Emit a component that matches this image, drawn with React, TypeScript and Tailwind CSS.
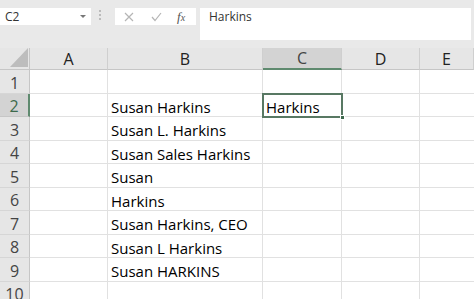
import React from 'react';

const cols = ['A', 'B', 'C', 'D', 'E'];

const rows: Record<number, string> = {
  2: 'Susan Harkins',
  3: 'Susan L. Harkins',
  4: 'Susan Sales Harkins',
  5: 'Susan',
  6: 'Harkins',
  7: 'Susan Harkins, CEO',
  8: 'Susan L Harkins',
  9: 'Susan HARKINS',
};

const cellFont = { fontFamily: '"Open Sans", "Noto Sans", sans-serif' };

export default function App() {
  return (
    <div className="w-[474px] h-[299px] overflow-hidden bg-white" style={cellFont}>
      {/* formula bar */}
      <div className="h-[48px] bg-[#e9e9e9] relative">
        <div className="absolute left-0 top-[8px] w-[91px] h-[17px] bg-white flex items-center justify-between pl-[5px] pr-[5px]">
          <span className="text-[12px] text-[#333] leading-none">C2</span>
          <span className="w-0 h-0 border-l-[3px] border-r-[3px] border-t-[3px] border-l-transparent border-r-transparent border-t-[#777]" />
        </div>
        <div className="absolute left-[99px] top-[10px] flex flex-col gap-[2px]">
          <span className="w-[2px] h-[2px] bg-[#bbb]" />
          <span className="w-[2px] h-[2px] bg-[#bbb]" />
          <span className="w-[2px] h-[2px] bg-[#bbb]" />
        </div>
        <div className="absolute left-[115px] top-[8px] w-[81px] h-[17px] bg-white flex items-center">
          <svg className="ml-[9px]" width="10" height="10" viewBox="0 0 10 10">
            <path d="M1 1 L9 9 M9 1 L1 9" stroke="#b5b5b5" strokeWidth="1.2" />
          </svg>
          <svg className="ml-[17px]" width="11" height="10" viewBox="0 0 11 10">
            <path d="M1 5 L4 8.5 L10 1" stroke="#b5b5b5" strokeWidth="1.2" fill="none" />
          </svg>
          <span
            className="ml-[15px] text-[13px] italic text-[#555] leading-none"
            style={{ fontFamily: '"Liberation Serif", serif' }}
          >
            f<span className="text-[10px]">x</span>
          </span>
        </div>
        <div className="absolute left-[200px] top-[8px] w-[271px] h-[32px] bg-white pl-[9px] text-[12px] leading-[17px] text-[#333]">
          Harkins
        </div>
      </div>

      {/* grid */}
      <div className="grid grid-cols-[30px_78px_155px_79px_78px_1fr]">
        {/* header row */}
        <div className="h-[22px] bg-[#e6e6e6] border-b border-[#c6c6c6] border-r border-r-[#c6c6c6] relative">
          <svg className="absolute left-[10px] top-[0px]" width="18" height="19" viewBox="0 0 18 19">
            <path d="M18 0 L18 19 L0 19 Z" fill="#bdbdbd" />
          </svg>
        </div>
        {cols.map((c) => (
          <div
            key={c}
            className={`h-[22px] flex items-center justify-center text-[16px] leading-none ${
              c === 'C'
                ? 'bg-[#d3d3d3] border-b-2 border-b-[#5f8a6f] text-[#444]'
                : 'bg-[#e6e6e6] border-b border-b-[#c6c6c6] text-[#222]'
            } border-r border-r-[#cfcfcf]`}
          >
            {c}
          </div>
        ))}

        {Array.from({ length: 10 }, (_, i) => i + 1).map((r) => (
          <React.Fragment key={r}>
            <div
              className={`h-[23.5px] flex items-center justify-center pt-[3px] text-[16px] leading-none border-b ${
                r === 2
                  ? 'bg-[#d3d3d3] text-[#3d6a4c] border-r-2 border-r-[#5f8a6f] border-b-[#c6c6c6]'
                  : 'bg-[#e6e6e6] text-[#444] border-r border-r-[#c6c6c6] border-b-[#d6d6d6]'
              }`}
            >
              {r}
            </div>
            <div className="h-[23.5px] border-b border-r border-[#e1e1e1]" />
            <div className="h-[23.5px] border-b border-r border-[#e1e1e1] flex items-center pt-[4px] pl-[3px] text-[15px] text-black whitespace-nowrap overflow-visible relative z-10">
              {rows[r] ?? ''}
            </div>
            {r === 2 ? (
              <div className="h-[23.5px] relative z-20">
                <div className="absolute left-[-1px] top-[-1px] right-[-1px] bottom-[-1px] border-2 border-[#587863] flex items-center pt-[4px] pl-[2px] text-[15px] text-black bg-white">
                  Harkins
                </div>
                <div className="absolute right-[-3px] bottom-[-3px] w-[5px] h-[5px] bg-[#3f6a4e] border border-white" />
              </div>
            ) : (
              <div className="h-[23.5px] border-b border-r border-[#e1e1e1]" />
            )}
            <div className="h-[23.5px] border-b border-r border-[#e1e1e1]" />
            <div className="h-[23.5px] border-b border-[#e1e1e1]" />
          </React.Fragment>
        ))}
      </div>
    </div>
  );
}
